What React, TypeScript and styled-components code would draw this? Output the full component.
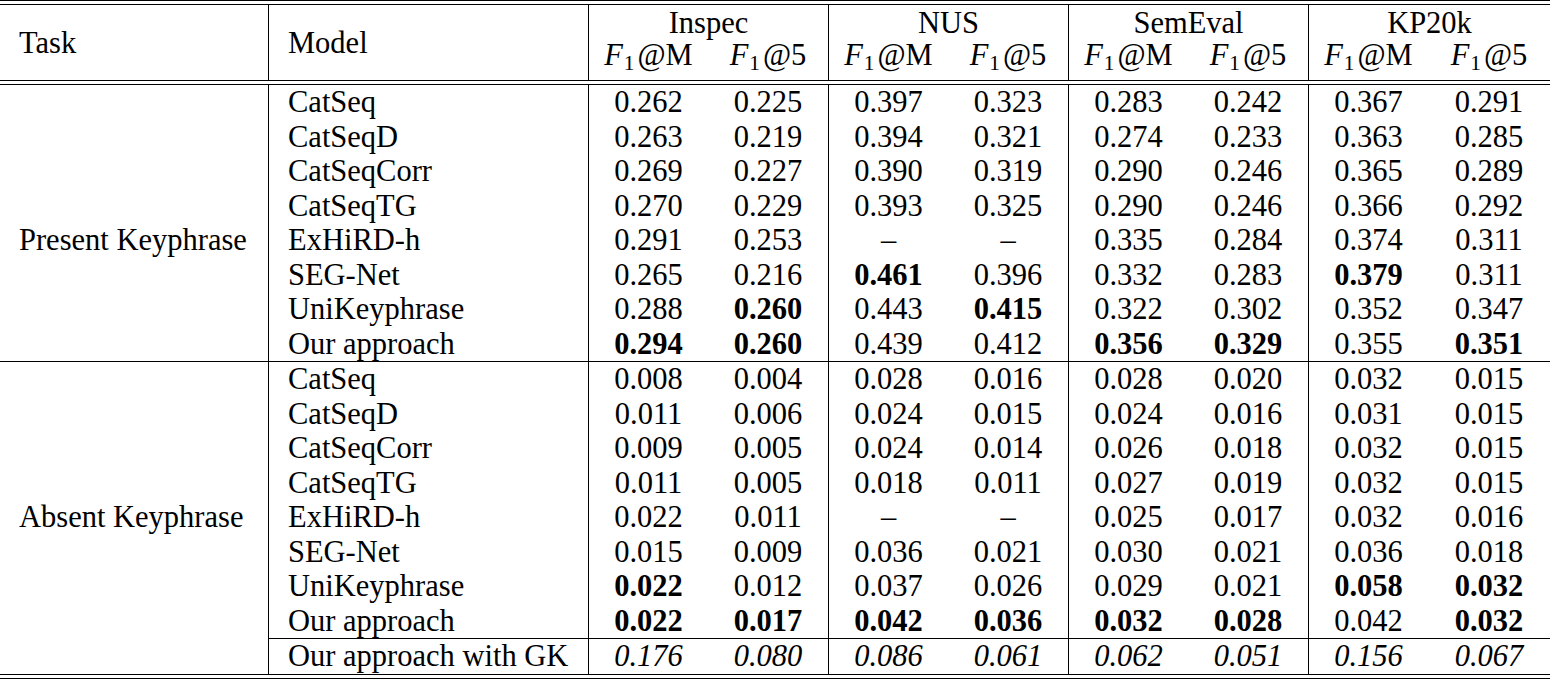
import React from 'react';
import styled, { createGlobalStyle } from 'styled-components';

type Row = { model: string; values: string[]; task?: string };

// a leading "*" marks a bold (best) score
const present: Row[] = [
  { model: 'CatSeq', values: ['0.262', '0.225', '0.397', '0.323', '0.283', '0.242', '0.367', '0.291'] },
  { model: 'CatSeqD', values: ['0.263', '0.219', '0.394', '0.321', '0.274', '0.233', '0.363', '0.285'] },
  { model: 'CatSeqCorr', values: ['0.269', '0.227', '0.390', '0.319', '0.290', '0.246', '0.365', '0.289'] },
  { model: 'CatSeqTG', values: ['0.270', '0.229', '0.393', '0.325', '0.290', '0.246', '0.366', '0.292'] },
  { model: 'ExHiRD-h', task: 'Present Keyphrase', values: ['0.291', '0.253', '–', '–', '0.335', '0.284', '0.374', '0.311'] },
  { model: 'SEG-Net', values: ['0.265', '0.216', '*0.461', '0.396', '0.332', '0.283', '*0.379', '0.311'] },
  { model: 'UniKeyphrase', values: ['0.288', '*0.260', '0.443', '*0.415', '0.322', '0.302', '0.352', '0.347'] },
  { model: 'Our approach', values: ['*0.294', '*0.260', '0.439', '0.412', '*0.356', '*0.329', '0.355', '*0.351'] },
];

const absent: Row[] = [
  { model: 'CatSeq', values: ['0.008', '0.004', '0.028', '0.016', '0.028', '0.020', '0.032', '0.015'] },
  { model: 'CatSeqD', values: ['0.011', '0.006', '0.024', '0.015', '0.024', '0.016', '0.031', '0.015'] },
  { model: 'CatSeqCorr', values: ['0.009', '0.005', '0.024', '0.014', '0.026', '0.018', '0.032', '0.015'] },
  { model: 'CatSeqTG', values: ['0.011', '0.005', '0.018', '0.011', '0.027', '0.019', '0.032', '0.015'] },
  { model: 'ExHiRD-h', task: 'Absent Keyphrase', values: ['0.022', '0.011', '–', '–', '0.025', '0.017', '0.032', '0.016'] },
  { model: 'SEG-Net', values: ['0.015', '0.009', '0.036', '0.021', '0.030', '0.021', '0.036', '0.018'] },
  { model: 'UniKeyphrase', values: ['*0.022', '0.012', '0.037', '0.026', '0.029', '0.021', '*0.058', '*0.032'] },
  { model: 'Our approach', values: ['*0.022', '*0.017', '*0.042', '*0.036', '*0.032', '*0.028', '0.042', '*0.032'] },
];

const withGK = ['0.176', '0.080', '0.086', '0.061', '0.062', '0.051', '0.156', '0.067'];

const datasets = ['Inspec', 'NUS', 'SemEval', 'KP20k'];
const widths = [268, 320, 120, 120, 120, 120, 120, 120, 120, 122];

const App: React.FC = () => {
  return (
    <>
      <GlobalStyle />
      <Table>
        <colgroup>
          {widths.map((w, i) => (
            <col key={i} style={{ width: w }} />
          ))}
        </colgroup>
        <tbody>
          <DoubleRule />
          <tr>
            <HeadCell rowSpan={2} $align="left">Task</HeadCell>
            <HeadCell rowSpan={2} $align="left" $line>Model</HeadCell>
            {datasets.map(d => (
              <HeadCell key={d} colSpan={2} $line>{d}</HeadCell>
            ))}
          </tr>
          <tr>
            {datasets.map(d => (
              <React.Fragment key={d}>
                <MetricCell $line><Metric k="M" /></MetricCell>
                <MetricCell><Metric k="5" /></MetricCell>
              </React.Fragment>
            ))}
          </tr>
          <DoubleRule />
          {present.map(r => <ResultRow key={'p' + r.model} row={r} />)}
          <SingleRule />
          {absent.map(r => <ResultRow key={'a' + r.model} row={r} />)}
          <tr>
            <RuleCell />
            <RuleCell colSpan={9} $top />
          </tr>
          <tr>
            <Cell $align="left" />
            <Cell $align="left" $line>Our approach with GK</Cell>
            {withGK.map((v, i) => (
              <Cell key={i} $line={i % 2 === 0} $italic>{v}</Cell>
            ))}
          </tr>
          <DoubleRule />
        </tbody>
      </Table>
    </>
  );
};

const Metric: React.FC<{ k: string }> = ({ k }) => (
  <>
    <Var>F</Var>
    <Sub>1</Sub>@{k}
  </>
);

const ResultRow: React.FC<{ row: Row }> = ({ row }) => (
  <tr>
    <Cell $align="left">{row.task}</Cell>
    <Cell $align="left" $line>{row.model}</Cell>
    {row.values.map((v, i) => {
      const bold = v.startsWith('*');
      return (
        <Cell key={i} $line={i % 2 === 0} $bold={bold}>
          {bold ? v.slice(1) : v}
        </Cell>
      );
    })}
  </tr>
);

const DoubleRule: React.FC = () => (
  <tr>
    <DoubleCell colSpan={10} />
  </tr>
);

const SingleRule: React.FC = () => (
  <tr>
    <RuleCell colSpan={10} $top />
  </tr>
);

const GlobalStyle = createGlobalStyle`
  html, body {
    margin: 0;
    padding: 0;
    background: #fff;
  }

  body {
    font-family: "Liberation Serif", "Times New Roman", serif;
    color: #000;
  }
`;

const Table = styled.table`
  width: 1550px;
  table-layout: fixed;
  border-collapse: separate;
  border-spacing: 0;
  font-size: 30.5px;
`;

const Cell = styled.td<{ $line?: boolean; $align?: 'left' | 'center'; $bold?: boolean; $italic?: boolean }>`
  height: 34.5px;
  line-height: 34.5px;
  padding: 0 0 0 ${p => (p.$align === 'left' ? '19px' : '0')};
  text-align: ${p => p.$align ?? 'center'};
  white-space: nowrap;
  font-weight: ${p => (p.$bold ? 700 : 400)};
  font-style: ${p => (p.$italic ? 'italic' : 'normal')};
  border-left: ${p => (p.$line ? '1px solid #000' : 'none')};
  vertical-align: middle;
`;

const HeadCell = styled(Cell)`
  height: 36px;
  line-height: 36px;
`;

const MetricCell = styled(Cell)`
  height: 28px;
  line-height: 28px;
  padding-bottom: 8px;
`;

const Var = styled.span`
  font-style: italic;
`;

const Sub = styled.span`
  font-size: 0.7em;
  position: relative;
  top: 0.22em;
  margin: 0 0.14em 0 0.04em;
`;

const RuleCell = styled.td<{ $top?: boolean }>`
  padding: 0;
  height: 0;
  line-height: 0;
  font-size: 0;
  border-top: ${p => (p.$top ? '1px solid #000' : 'none')};
`;

const DoubleCell = styled.td`
  padding: 0;
  height: 3px;
  line-height: 0;
  font-size: 0;
  border-top: 1px solid #000;
  border-bottom: 1px solid #000;
  box-sizing: content-box;
`;

export default App;
